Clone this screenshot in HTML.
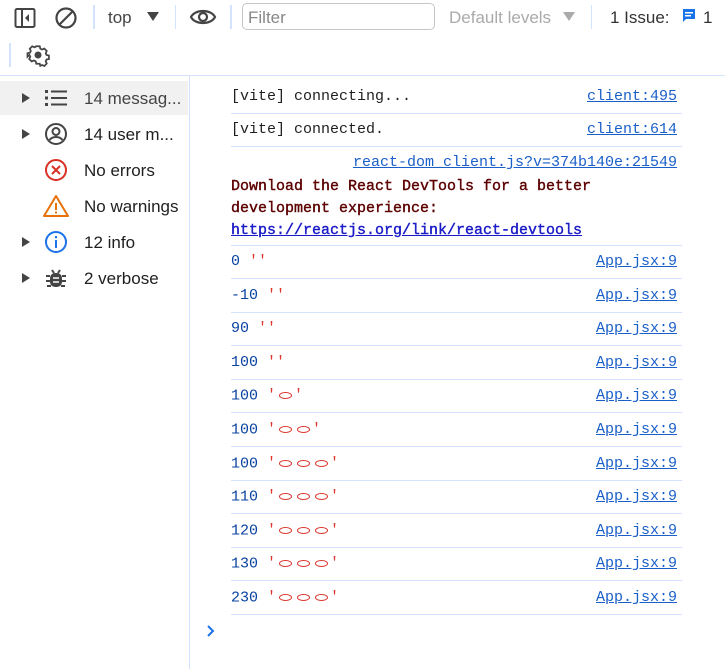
<!DOCTYPE html>
<html><head><meta charset="utf-8"><style>
*{box-sizing:border-box;margin:0;padding:0}
body{width:725px;height:669px;overflow:hidden;background:#fff;font-family:"Liberation Sans","Noto Sans CJK KR",sans-serif;color:#1f1f1f;position:relative}
.a{position:absolute}
.sep{position:absolute;width:2px;background:#d3e3fd}
.tb{font-size:17px;color:#444}
.side{font-size:17px;color:#1f1f1f}
.tri{position:absolute;width:0;height:0;border-left:8px solid #444;border-top:5px solid transparent;border-bottom:5px solid transparent}
.mono{font-family:"Liberation Mono",monospace;font-size:15px}
.row{position:absolute;left:231px;width:451px;height:1px;background:#d3e3fd}
.lnk{position:absolute;right:48px;color:#1a5fc8;text-decoration:underline}
.num{color:#0842a0}
.str{color:#dc362e}
.o{display:inline-block;width:18px;text-align:center;vertical-align:middle}
.o i{display:inline-block;width:13px;height:7px;border:1.5px solid #dc362e;border-radius:50%}
</style></head><body>
<!-- toolbar -->
<svg class="a" style="left:13px;top:6px" width="24" height="24" viewBox="0 0 24 24"><rect x="2.5" y="3" width="19" height="18" rx="1.5" fill="none" stroke="#444" stroke-width="2"/><line x1="9" y1="3" x2="9" y2="21" stroke="#444" stroke-width="2"/><path d="M16 8 L12 12 L16 16Z" fill="#444"/></svg>
<svg class="a" style="left:54px;top:6px" width="24" height="24" viewBox="0 0 24 24"><circle cx="12" cy="12" r="9.5" fill="none" stroke="#444" stroke-width="2.2"/><line x1="5.5" y1="18.5" x2="18.5" y2="5.5" stroke="#444" stroke-width="2.2"/></svg>
<div class="sep" style="left:93px;top:5px;height:24px"></div>
<div class="a tb" style="left:108px;top:8px">top</div>
<div class="a" style="left:147px;top:12px;border-top:9px solid #444;border-left:6px solid transparent;border-right:6px solid transparent"></div>
<div class="sep" style="left:175px;top:5px;height:24px;width:1px"></div>
<svg class="a" style="left:189px;top:6px" width="28" height="22" viewBox="0 0 28 22"><path d="M2 11 C6 3,22 3,26 11 C22 19,6 19,2 11Z" fill="none" stroke="#444" stroke-width="2.2"/><circle cx="14" cy="11" r="4" fill="none" stroke="#444" stroke-width="2.2"/></svg>
<div class="sep" style="left:230px;top:5px;height:24px"></div>
<div class="a" style="left:242px;top:3px;width:193px;height:27px;border:1px solid #c4c7c5;border-radius:5px"></div>
<div class="a" style="left:248px;top:8px;font-size:17px;color:#888">Filter</div>
<div class="a" style="left:449px;top:8px;font-size:17px;color:#aaa">Default levels</div>
<div class="a" style="left:563px;top:12px;border-top:9px solid #aaa;border-left:6px solid transparent;border-right:6px solid transparent"></div>
<div class="sep" style="left:591px;top:5px;height:24px;width:1px"></div>
<div class="a tb" style="left:610px;top:8px;color:#333">1 Issue:</div>
<svg class="a" style="left:681px;top:8px" width="16" height="16" viewBox="0 0 16 16"><path d="M2 1h12v10H5l-3 3z" fill="#1a73e8"/><rect x="4" y="4" width="8" height="1.5" fill="#fff"/><rect x="4" y="7" width="6" height="1.5" fill="#fff"/></svg>
<div class="a tb" style="left:703px;top:8px;color:#333">1</div>
<div class="sep" style="left:9px;top:43px;height:24px"></div>
<svg class="a" style="left:26px;top:43px" width="24" height="24" viewBox="0 0 24 24"><path d="M10 2h4l.6 2.8 2 1 2.6-1.2 2.8 2.8-1.2 2.6 1 2 2.7.6v4l-2.7.6-1 2 1.2 2.6-2.8 2.8-2.6-1.2-2 1L14 22h-4l-.6-2.8-2-1-2.6 1.2-2.8-2.8 1.2-2.6-1-2L0 14v-4l2.8-.6 1-2L2.6 4.8 5.4 2 8 3.2l2-1z" transform="translate(1.5 1.5) scale(.875)" fill="none" stroke="#444" stroke-width="2"/><circle cx="12" cy="12" r="3.5" fill="#444"/></svg>
<div class="a" style="left:0;top:75px;width:725px;height:1px;background:#d3e3fd"></div>
<!-- sidebar -->
<div class="a" style="left:189px;top:76px;width:1px;height:593px;background:#d3e3fd"></div>
<div class="a" style="left:0;top:81px;width:188px;height:34px;background:#f1f1f1"></div>
<div class="tri" style="left:22px;top:93px"></div>
<svg class="a" style="left:44px;top:88px" width="24" height="20" viewBox="0 0 24 20"><g fill="#444"><rect x="1" y="2" width="3" height="3"/><rect x="1" y="8.5" width="3" height="3"/><rect x="1" y="15" width="3" height="3"/><rect x="7" y="2.5" width="16" height="2"/><rect x="7" y="9" width="16" height="2"/><rect x="7" y="15.5" width="16" height="2"/></g></svg>
<div class="a side" style="left:84px;top:89px;color:#444">14 messag...</div>
<div class="tri" style="left:22px;top:129px"></div>
<svg class="a" style="left:44px;top:122px" width="24" height="24" viewBox="0 0 24 24"><circle cx="12" cy="12" r="10" fill="none" stroke="#444" stroke-width="2"/><circle cx="12" cy="9.5" r="3.5" fill="none" stroke="#444" stroke-width="2"/><path d="M5.5 18c3-4 10-4 13 0" fill="none" stroke="#444" stroke-width="2"/></svg>
<div class="a side" style="left:84px;top:125px">14 user m...</div>
<svg class="a" style="left:44px;top:158px" width="24" height="24" viewBox="0 0 24 24"><circle cx="12" cy="12" r="10" fill="none" stroke="#d93025" stroke-width="2"/><path d="M8 8l8 8M16 8l-8 8" stroke="#d93025" stroke-width="2"/></svg>
<div class="a side" style="left:84px;top:161px">No errors</div>
<svg class="a" style="left:42px;top:194px" width="28" height="24" viewBox="0 0 28 24"><path d="M14 2L26 22H2Z" fill="none" stroke="#e8710a" stroke-width="2" stroke-linejoin="round"/><rect x="13" y="9" width="2" height="7" fill="#e8710a"/><rect x="13" y="17.5" width="2" height="2" fill="#e8710a"/></svg>
<div class="a side" style="left:84px;top:197px">No warnings</div>
<div class="tri" style="left:22px;top:237px"></div>
<svg class="a" style="left:44px;top:230px" width="24" height="24" viewBox="0 0 24 24"><circle cx="12" cy="12" r="10" fill="none" stroke="#1a73e8" stroke-width="2"/><rect x="11" y="10" width="2" height="8" fill="#1a73e8"/><rect x="11" y="6" width="2" height="2.2" fill="#1a73e8"/></svg>
<div class="a side" style="left:84px;top:233px">12 info</div>
<div class="tri" style="left:22px;top:273px"></div>
<svg class="a" style="left:45px;top:266px" width="22" height="24" viewBox="0 0 22 24"><path d="M7 4l2 3M15 4l-2 3" stroke="#444" stroke-width="2"/><rect x="5" y="7" width="12" height="14" rx="5" fill="#444"/><path d="M1 10h4M17 10h4M1 15h4M17 15h4M2 20h4M16 20h4" stroke="#444" stroke-width="2"/><path d="M8 12h6M8 16h6" stroke="#fff" stroke-width="1.5"/></svg>
<div class="a side" style="left:84px;top:269px">2 verbose</div>
<!-- console -->
<div class="mono">
<div class="a" style="left:231px;top:88px">[vite] connecting...</div><div class="lnk" style="top:88px">client:495</div>
<div class="row" style="top:113px"></div>
<div class="a" style="left:231px;top:121px">[vite] connected.</div><div class="lnk" style="top:121px">client:614</div>
<div class="row" style="top:146px"></div>
<div class="lnk" style="top:154px">react-dom_client.js?v=374b140e:21549</div>
<div class="a" style="left:231px;top:176px;color:#5c0000;font-weight:bold;line-height:22px;font-weight:normal;-webkit-text-stroke:.4px #5c0000">Download the React DevTools for a better<br>development experience:<br><span style="color:#1a1ac8;text-decoration:underline;-webkit-text-stroke:.4px #1a1ac8">https://reactjs.org/link/react-devtools</span></div>
<div class="row" style="top:245px"></div>
<div class="a" style="left:231px;top:253px"><span class="num">0</span> <span class="str">''</span></div><div class="lnk" style="top:253px">App.jsx:9</div>
<div class="row" style="top:278px"></div>
<div class="a" style="left:231px;top:287px"><span class="num">-10</span> <span class="str">''</span></div><div class="lnk" style="top:287px">App.jsx:9</div>
<div class="row" style="top:312px"></div>
<div class="a" style="left:231px;top:320px"><span class="num">90</span> <span class="str">''</span></div><div class="lnk" style="top:320px">App.jsx:9</div>
<div class="row" style="top:345px"></div>
<div class="a" style="left:231px;top:354px"><span class="num">100</span> <span class="str">''</span></div><div class="lnk" style="top:354px">App.jsx:9</div>
<div class="row" style="top:379px"></div>
<div class="a" style="left:231px;top:387px"><span class="num">100</span> <span class="str">'<span class="o"><i></i></span>'</span></div><div class="lnk" style="top:387px">App.jsx:9</div>
<div class="row" style="top:412px"></div>
<div class="a" style="left:231px;top:421px"><span class="num">100</span> <span class="str">'<span class="o"><i></i></span><span class="o"><i></i></span>'</span></div><div class="lnk" style="top:421px">App.jsx:9</div>
<div class="row" style="top:446px"></div>
<div class="a" style="left:231px;top:455px"><span class="num">100</span> <span class="str">'<span class="o"><i></i></span><span class="o"><i></i></span><span class="o"><i></i></span>'</span></div><div class="lnk" style="top:455px">App.jsx:9</div>
<div class="row" style="top:480px"></div>
<div class="a" style="left:231px;top:488px"><span class="num">110</span> <span class="str">'<span class="o"><i></i></span><span class="o"><i></i></span><span class="o"><i></i></span>'</span></div><div class="lnk" style="top:488px">App.jsx:9</div>
<div class="row" style="top:513px"></div>
<div class="a" style="left:231px;top:522px"><span class="num">120</span> <span class="str">'<span class="o"><i></i></span><span class="o"><i></i></span><span class="o"><i></i></span>'</span></div><div class="lnk" style="top:522px">App.jsx:9</div>
<div class="row" style="top:547px"></div>
<div class="a" style="left:231px;top:555px"><span class="num">130</span> <span class="str">'<span class="o"><i></i></span><span class="o"><i></i></span><span class="o"><i></i></span>'</span></div><div class="lnk" style="top:555px">App.jsx:9</div>
<div class="row" style="top:580px"></div>
<div class="a" style="left:231px;top:589px"><span class="num">230</span> <span class="str">'<span class="o"><i></i></span><span class="o"><i></i></span><span class="o"><i></i></span>'</span></div><div class="lnk" style="top:589px">App.jsx:9</div>
<div class="row" style="top:614px"></div>
</div>
<svg class="a" style="left:205px;top:624px" width="12" height="14" viewBox="0 0 12 14"><path d="M3 2l5 5-5 5" fill="none" stroke="#1a73e8" stroke-width="2"/></svg>
</body></html>
